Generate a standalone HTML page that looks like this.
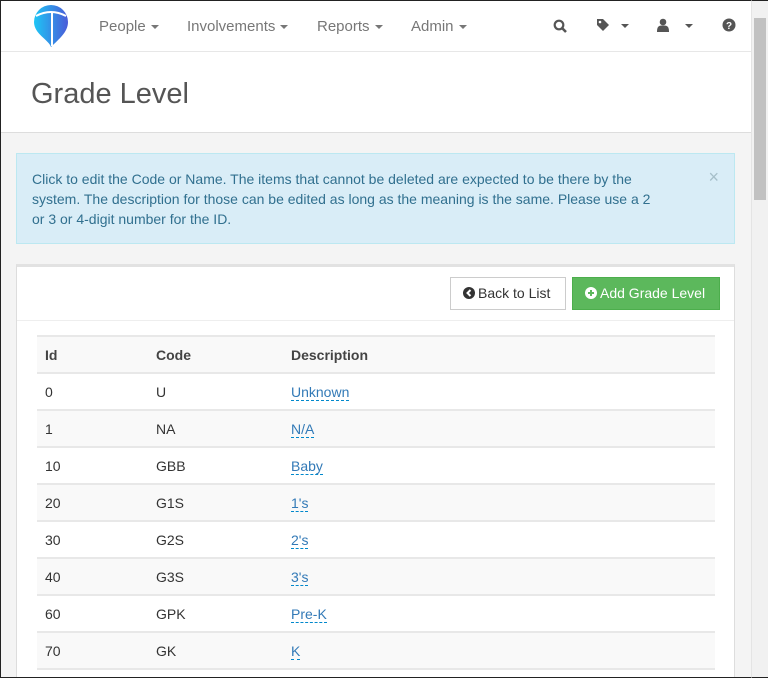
<!DOCTYPE html>
<html><head><style>
*{box-sizing:border-box;margin:0;padding:0}
html{overflow:hidden;width:768px;height:678px}
body{width:768px;height:678px;overflow:hidden;font-family:"Liberation Sans",sans-serif;font-size:14px;color:#333;background:#f4f4f4;position:relative}
.bl{position:absolute;background:#222}
.sb{position:absolute;right:0;top:0;width:17px;height:678px;background:#f1f1f1;border-top:1px solid #222;border-bottom:1px solid #222;border-left:1px solid #e4e4e4}
.thumb{position:absolute;left:2px;top:17px;width:12px;height:182px;background:#c1c1c1}
.nav{position:absolute;left:0;top:0;width:751px;height:52px;background:#fff;border-bottom:1px solid #e7e7e7}
.nav .i{position:absolute;top:18px;color:#777;font-size:15px}
.caret{display:inline-block;width:0;height:0;border-left:4px solid transparent;border-right:4px solid transparent;border-top:4px solid #777;vertical-align:middle;margin-left:5px}
.hdr{position:absolute;left:0;top:52px;width:751px;height:81px;background:#fff;border-bottom:1px solid #ddd}
.hdr h1{position:absolute;left:31px;top:26px;font-weight:normal;font-size:29px;color:#555}
.alert{position:absolute;left:16px;top:153px;width:719px;height:91px;background:#d9edf7;border:1px solid #bce8f1;color:#31708f;padding:15px 72px 15px 15px;line-height:20px;font-size:14px}
.alert .x{position:absolute;right:15px;top:13px;color:#a6bfc9;font-size:18px}
.panel{position:absolute;left:16px;top:264px;width:719px;height:420px;background:#fff;border:1px solid #ddd;border-top:3px solid #e2e2e2;overflow:hidden}
.tb{height:54px;border-bottom:1px solid #eee;position:relative}
.btn{position:absolute;top:10px;height:33px;line-height:31px;padding:0 12px;font-size:14px;border:1px solid #ccc;color:#333;background:#fff;white-space:nowrap}
.btn svg{vertical-align:-1px;margin-right:3px}
.btn2{background:#5cb85c;border-color:#4cae4c;color:#fff}
table{position:absolute;left:20px;top:68px;width:678px;border-collapse:collapse}
td,th{height:37px;padding:0 8px;text-align:left;border-top:2px solid #e8e8e8;font-size:14px}
th{font-weight:bold;color:#444}
tr.g{background:#f9f9f9}
td.c1{width:111px}td.c2{width:135px}
a{color:#337ab7;text-decoration:none;border-bottom:1px dashed #08c}
</style></head><body>
<div class="nav">
<svg style="position:absolute;left:33px;top:4px" width="36" height="44" viewBox="0 0 36 44"><defs><linearGradient id="g" x1="0" x2="1"><stop offset="0" stop-color="#1ec6f5"/><stop offset="1" stop-color="#4a5bd8"/></linearGradient></defs><path d="M18 1A17 17 0 0 1 35 18C35 28 26 35 18 43C16 36 1 30 1 18A17 17 0 0 1 18 1Z" fill="url(#g)"/><path d="M3 12Q18 4 33 12" stroke="#fff" stroke-width="2" fill="none"/><path d="M19 9V42" stroke="#fff" stroke-width="2"/></svg>
<span class="i" style="left:99px">People<span class="caret"></span></span>
<span class="i" style="left:187px">Involvements<span class="caret"></span></span>
<span class="i" style="left:317px">Reports<span class="caret"></span></span>
<span class="i" style="left:411px">Admin<span class="caret"></span></span>
<svg style="position:absolute;left:553px;top:19px" width="14" height="14" viewBox="0 0 14 14"><circle cx="6" cy="6" r="4.3" stroke="#555" stroke-width="2.2" fill="none"/><path d="M9 9L13 13" stroke="#555" stroke-width="2.6"/></svg>
<svg style="position:absolute;left:596px;top:18px" width="14" height="14" viewBox="0 0 14 14"><path d="M1 1H7L13 7L7 13L1 7Z" fill="#555"/><circle cx="4" cy="4" r="1.3" fill="#fff"/></svg>
<span class="caret" style="position:absolute;left:616px;top:24px;border-top-color:#555"></span>
<svg style="position:absolute;left:657px;top:18px" width="12" height="14" viewBox="0 0 12 14"><circle cx="6" cy="4" r="3.3" fill="#555"/><path d="M0 14C0 8 2 7.5 6 7.5S12 8 12 14Z" fill="#555"/></svg>
<span class="caret" style="position:absolute;left:680px;top:24px;border-top-color:#555"></span>
<svg style="position:absolute;left:722px;top:18px" width="14" height="14" viewBox="0 0 14 14"><circle cx="7" cy="7" r="6.5" fill="#555"/><text x="7" y="11" font-size="10" font-weight="bold" text-anchor="middle" fill="#fff" font-family="Liberation Sans">?</text></svg>
</div>
<div class="hdr"><h1>Grade Level</h1></div>
<div class="alert">Click to edit the Code or Name. The items that cannot be deleted are expected to be there by the system. The description for those can be edited as long as the meaning is the same. Please use a 2 or 3 or 4-digit number for the ID.<span class="x">×</span></div>
<div class="panel">
<div class="tb">
<span class="btn" style="left:433px;width:116px"><svg width="12" height="12" viewBox="0 0 12 12"><circle cx="6" cy="6" r="6" fill="#333"/><path d="M7.5 3L4.5 6L7.5 9" stroke="#fff" stroke-width="2" fill="none"/></svg>Back to List</span>
<span class="btn btn2" style="left:555px;width:148px"><svg width="12" height="12" viewBox="0 0 12 12"><circle cx="6" cy="6" r="6" fill="#fff"/><path d="M6 3V9M3 6H9" stroke="#5cb85c" stroke-width="2"/></svg>Add Grade Level</span>
</div>
<table>
<tr class="g"><th>Id</th><th>Code</th><th>Description</th></tr>
<tr><td class="c1">0</td><td class="c2">U</td><td><a>Unknown</a></td></tr>
<tr class="g"><td>1</td><td>NA</td><td><a>N/A</a></td></tr>
<tr><td>10</td><td>GBB</td><td><a>Baby</a></td></tr>
<tr class="g"><td>20</td><td>G1S</td><td><a>1's</a></td></tr>
<tr><td>30</td><td>G2S</td><td><a>2's</a></td></tr>
<tr class="g"><td>40</td><td>G3S</td><td><a>3's</a></td></tr>
<tr><td>60</td><td>GPK</td><td><a>Pre-K</a></td></tr>
<tr class="g"><td>70</td><td>GK</td><td><a>K</a></td></tr>
<tr><td>&nbsp;</td><td></td><td></td></tr>
</table>
</div>
<div class="sb"><div class="thumb"></div></div>
<div class="bl" style="left:0;top:0;width:751px;height:1px"></div>
<div class="bl" style="left:0;top:0;width:1px;height:678px"></div>
<div class="bl" style="left:0;top:677px;width:751px;height:1px"></div>
</body></html>
